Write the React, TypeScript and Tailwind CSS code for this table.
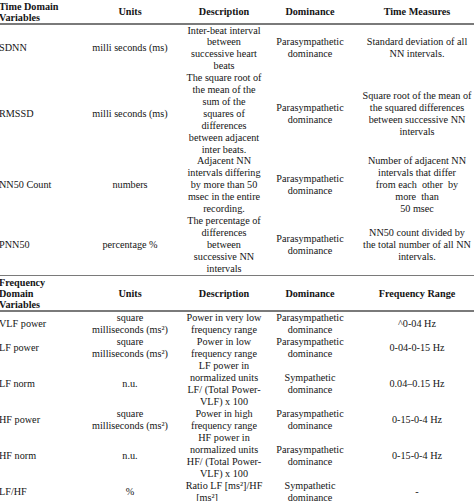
import React from "react";

type Row = string[][];

const time: Row[] = [
  [
    ["SDNN"],
    ["milli seconds (ms)"],
    ["Inter-beat interval", "between", "successive heart", "beats"],
    ["Parasympathetic", "dominance"],
    ["Standard deviation of all", "NN intervals."],
  ],
  [
    ["RMSSD"],
    ["milli seconds (ms)"],
    ["The square root of", "the mean of the", "sum of the", "squares of", "differences", "between adjacent", "inter beats."],
    ["Parasympathetic", "dominance"],
    ["Square root of the mean of", "the squared differences", "between successive NN", "intervals"],
  ],
  [
    ["NN50 Count"],
    ["numbers"],
    ["Adjacent NN", "intervals differing", "by more than 50", "msec in the entire", "recording."],
    ["Parasympathetic", "dominance"],
    ["Number of adjacent NN", "intervals that differ", "from each\u00a0 other\u00a0 by", "more\u00a0 than", "50 msec"],
  ],
  [
    ["PNN50"],
    ["percentage %"],
    ["The percentage of", "differences", "between", "successive NN", "intervals"],
    ["Parasympathetic", "dominance"],
    ["NN50 count divided by", "the total number of all NN", "intervals."],
  ],
];

const freq: Row[] = [
  [
    ["VLF power"],
    ["square", "milliseconds (ms\u00b2)"],
    ["Power in very low", "frequency range"],
    ["Parasympathetic", "dominance"],
    ["^0-04 Hz"],
  ],
  [
    ["LF power"],
    ["square", "milliseconds (ms\u00b2)"],
    ["Power in low", "frequency range"],
    ["Parasympathetic", "dominance"],
    ["0-04-0-15 Hz"],
  ],
  [
    ["LF norm"],
    ["n.u."],
    ["LF power in", "normalized units", "LF/ (Total Power-", "VLF) x 100"],
    ["Sympathetic", "dominance"],
    ["0.04\u20130.15 Hz"],
  ],
  [
    ["HF power"],
    ["square", "milliseconds (ms\u00b2)"],
    ["Power in high", "frequency range"],
    ["Parasympathetic", "dominance"],
    ["0-15-0-4 Hz"],
  ],
  [
    ["HF norm"],
    ["n.u."],
    ["HF power in", "normalized units", "HF/ (Total Power-", "VLF) x 100"],
    ["Parasympathetic", "dominance"],
    ["0-15-0-4 Hz"],
  ],
  [
    ["LF/HF"],
    ["%"],
    ["Ratio LF [ms\u00b2]/HF", "[ms\u00b2]"],
    ["Sympathetic", "dominance"],
    ["-"],
  ],
];

const grid = "grid grid-cols-[88px_84px_104px_68px_146px]";

function Cells({ row, lead, bold }: { row: Row; lead: string; bold?: boolean }) {
  return (
    <>
      {row.map((lines, ci) => (
        <div
          key={ci}
          className={
            "flex flex-col justify-center " +
            (ci === 0 ? "items-start -ml-px" : "items-center") +
            (bold ? " font-bold" : "")
          }
        >
          {lines.map((l, li) => (
            <div
              key={li}
              className={
                "whitespace-nowrap " +
                lead +
                (l === "[ms\u00b2]" ? " pr-[34px]" : "")
              }
            >
              {l}
            </div>
          ))}
        </div>
      ))}
    </>
  );
}

function Rule() {
  return <div className="h-[1.5px] w-[474px] bg-[#7a7a7a]" />;
}

export default function App() {
  return (
    <div
      className="w-[474px] h-[501px] overflow-hidden bg-white text-[#141414] text-[10.2px]"
      style={{ fontFamily: '"Liberation Serif", "Times New Roman", serif' }}
    >
      <div className={grid + " h-[23px]"}>
        <Cells
          bold
          lead="leading-[11px]"
          row={[["Time Domain", "Variables"], ["Units"], ["Description"], ["Dominance"], ["Time Measures"]]}
        />
      </div>
      <Rule />
      <div className="flex flex-col">
        {time.map((r, i) => (
          <div key={i} className={grid}>
            <Cells row={r} lead="leading-[11.9px]" />
          </div>
        ))}
      </div>
      <Rule />
      <div className={grid + " pt-px"}>
        <Cells
          bold
          lead="leading-[11px]"
          row={[["Frequency", "Domain", "Variables"], ["Units"], ["Description"], ["Dominance"], ["Frequency Range"]]}
        />
      </div>
      <Rule />
      <div className="flex flex-col">
        {freq.map((r, i) => (
          <div key={i} className={grid}>
            <Cells row={r} lead="leading-[12px]" />
          </div>
        ))}
      </div>
    </div>
  );
}
